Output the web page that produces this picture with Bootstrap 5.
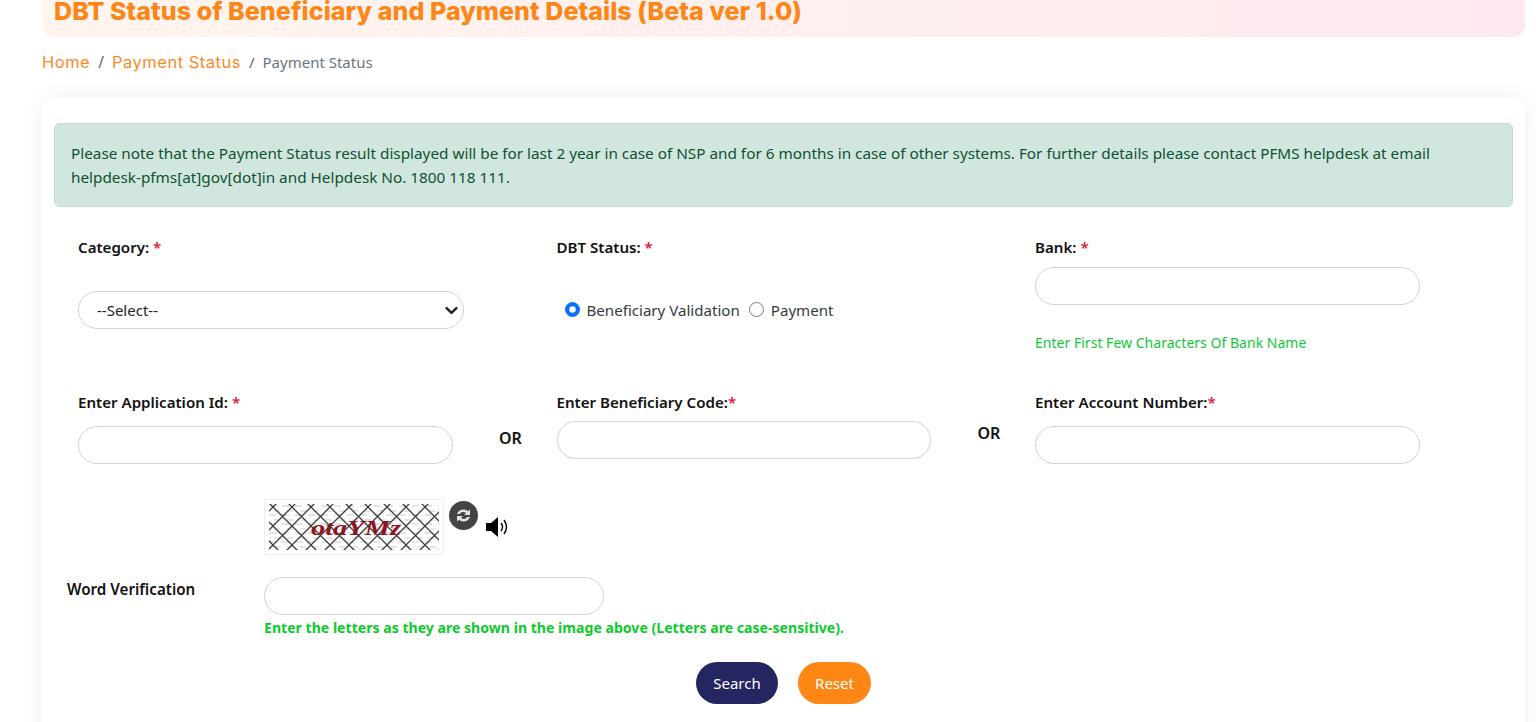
<!doctype html>
<html lang="en"><head><meta charset="utf-8"><title>DBT Status</title>
<link href="https://cdn.jsdelivr.net/npm/bootstrap@5.3.0/dist/css/bootstrap.min.css" rel="stylesheet">
<style>
html,body{overflow:hidden;height:722px}
body{font-family:"Noto Sans","Open Sans",sans-serif;font-size:15px;color:#212529;background:#fff}
.page-wrap{padding:0 11px 0 42px}
.title-bar{margin-top:-15px;height:52px;border-radius:0 0 12px 12px;background:linear-gradient(90deg,#fff5ee,#ffe9ef);padding:15px 12px 0}
.title-bar h1{font-family:Inter,sans-serif;font-weight:800;font-size:25px;letter-spacing:.08px;line-height:22px;color:#fd8617;margin:0}
.crumbs{margin:14px 0 25px;height:22px;font-size:15.5px;line-height:22px;--bs-breadcrumb-margin-bottom:0;--bs-breadcrumb-item-padding-x:10.5px}
.crumbs a{font-family:Inter,sans-serif;color:#fd8a2a;text-decoration:none;font-size:16.5px;letter-spacing:.5px}
.crumbs .active{color:#6c757d;font-size:15px}
.crumbs-list{margin:0}
.form-panel{border:0;border-radius:12px;box-shadow:0 0 22px rgba(0,0,0,.07);padding:25px 12px 60px;height:700px}
.note{background:#d1e7dd;border:1px solid #c3dbd0;color:#0f5132;border-radius:6px;margin:0 0 29px;padding:17px 16px;height:84px;font-size:15.3px;line-height:24px}
.form-grid{margin-left:12px;width:1435.5px}
.field-col{width:478.5px;padding-left:12px;flex:none}
.fld-label{font-weight:600;font-size:15.1px;line-height:22px;margin:0;color:#111;display:block}
.req{color:#e3173a}
.top-row{height:155px}
.pill{border-radius:50rem;border:1px solid #ced4da;height:38px;font-size:15px;padding-left:18px}
.pill-short{width:385px}
.pill-sel{width:386px;background-position:right 5px center;background-size:13px;background-image:url("data:image/svg+xml,%3csvg xmlns='http://www.w3.org/2000/svg' viewBox='0 0 16 16'%3e%3cpath fill='none' stroke='%23222' stroke-linecap='round' stroke-linejoin='round' stroke-width='3' d='m2 5 6 6 6-6'/%3e%3c/svg%3e")}
.pill-mid{width:375px}
.pill-code{width:374px}
.sel-gap{margin-top:33px}
.radio-line{margin-top:41px;padding-left:8px;font-size:15.1px;line-height:22px;height:24px}
.radio-line .form-check-input{margin:0 7px 0 0;width:15px;height:15px;float:none;vertical-align:-1px;border-color:#777}
.radio-line .form-check-input:checked{background-color:#0d6efd;border-color:#0d6efd}
.radio-line label{margin-right:9px;color:#343a40}
.bank-gap{margin-top:9px}
.hint{color:#14c73a;font-size:14.05px;line-height:20px;margin-top:28px}
.mid-row{height:108px}
.or-wrap{display:flex;gap:46px}
.or-tag{font-weight:600;font-size:16px;line-height:22px;width:52px;text-align:left;margin-top:36px;flex:none;color:#111}
.or-up{margin-top:31px;margin-left:1px}
.gap-a{margin-top:13px}.gap-b{margin-top:8px}
.captcha-row{display:flex;padding-left:198px;height:78px}
.cap-img{width:180px;height:56px;border:1px solid #eee;padding:4px;display:block}
.cap-refresh{margin:2px 7px 0 5px;width:29px;height:29px}
.cap-sound{width:24px;height:24px;margin-top:16px}
.word-row{display:flex}
.word-label{width:198px;font-weight:600;font-size:15.2px;line-height:22px;padding-top:1px;padding-left:1px;color:#111}
.word-input{width:340px}
.word-hint{color:#0ccb2a;font-weight:700;font-size:14.1px;line-height:20px;margin-top:3px}
.btn-row{display:flex;justify-content:center;gap:20px;margin-top:24px;width:1435px}
.btn-navy,.btn-orange{border-radius:50rem;height:42px;color:#fff;font-size:15px;border:0;padding:0 16px}
.btn-navy{background:#252561;width:82px}
.btn-orange{background:#fd8614;width:73px}
</style></head><body>
<div class="page-wrap">
<div class="title-bar"><h1>DBT Status of Beneficiary and Payment Details (Beta ver 1.0)</h1></div>
<nav class="crumbs" aria-label="breadcrumb"><ol class="breadcrumb crumbs-list">
<li class="breadcrumb-item"><a href="#">Home</a></li>
<li class="breadcrumb-item"><a href="#">Payment Status</a></li>
<li class="breadcrumb-item active">Payment Status</li></ol></nav>
<div class="card form-panel">
<div class="alert note" role="alert">Please note that the Payment Status result displayed will be for last 2 year in case of NSP and for 6 months in case of other systems. For further details please contact PFMS helpdesk at email helpdesk-pfms[at]gov[dot]in and Helpdesk No. 1800 118 111.</div>
<div class="form-grid">
<div class="d-flex top-row">
<div class="field-col"><label class="fld-label">Category: <span class="req">*</span></label>
<select class="form-select pill pill-sel sel-gap"><option>--Select--</option></select></div>
<div class="field-col"><label class="fld-label">DBT Status: <span class="req">*</span></label>
<div class="radio-line"><input class="form-check-input" type="radio" name="st" checked><label>Beneficiary Validation</label><input class="form-check-input" type="radio" name="st"><label>Payment</label></div></div>
<div class="field-col"><label class="fld-label">Bank: <span class="req">*</span></label>
<input class="form-control pill pill-short bank-gap"><div class="hint">Enter First Few Characters Of Bank Name</div></div>
</div>
<div class="d-flex mid-row">
<div class="field-col or-wrap"><div><label class="fld-label">Enter Application Id: <span class="req">*</span></label><input class="form-control pill pill-mid gap-a"></div><div class="or-tag">OR</div></div>
<div class="field-col or-wrap"><div><label class="fld-label">Enter Beneficiary Code:<span class="req">*</span></label><input class="form-control pill pill-code gap-b"></div><div class="or-tag or-up">OR</div></div>
<div class="field-col"><label class="fld-label">Enter Account Number:<span class="req">*</span></label><input class="form-control pill pill-short gap-a"></div>
</div>
<div class="captcha-row">
<svg class="cap-img" viewBox="0 0 170 46" role="img" aria-label="captcha">
<defs><pattern id="hatch" width="19" height="19" patternUnits="userSpaceOnUse" patternTransform="translate(4 3)"><path d="M0 0L19 19M19 0L0 19" stroke="#1c1c1c" stroke-width="1.3"/></pattern>
<pattern id="noise" width="13" height="9" patternUnits="userSpaceOnUse"><path d="M0 2h7M5 7h6" stroke="#ccc" stroke-width="1.2"/></pattern></defs>
<rect width="170" height="46" fill="#fff"/><rect width="170" height="46" fill="url(#noise)"/><rect width="170" height="46" fill="url(#hatch)" opacity=".85"/>
<text x="42" y="31" font-family="Liberation Serif,serif" font-style="italic" font-weight="700" font-size="21" fill="#8e1220" textLength="90" lengthAdjust="spacingAndGlyphs">otaYMz</text></svg>
<svg class="cap-refresh" viewBox="0 0 29 29"><circle cx="14.5" cy="14.5" r="14.5" fill="#444"/><path d="M8 13a6.800 6.800 0 0 1 11-2.800l2-1.700v5.500h-6l2-1.800a4 4 0 0 0-6.200.8zM21 16a6.800 6.800 0 0 1-11 2.800l-2 1.700V15h6l-2 1.800a4 4 0 0 0 6.200-.8z" fill="#e4e4e4"/></svg>
<svg class="cap-sound" viewBox="0 0 24 24"><path d="M1 8h5l7-6v20l-7-6H1z" fill="#000"/><path d="M16 8q3 4 0 8M19 5q5 7 0 14" fill="none" stroke="#000" stroke-width="1.4"/></svg>
</div>
<div class="word-row"><div class="word-label">Word Verification</div><div><input class="form-control pill word-input"><div class="word-hint">Enter the letters as they are shown in the image above (Letters are case-sensitive).</div></div></div>
<div class="btn-row"><button class="btn btn-navy">Search</button><button class="btn btn-orange">Reset</button></div>
</div></div></div>
</body></html>
